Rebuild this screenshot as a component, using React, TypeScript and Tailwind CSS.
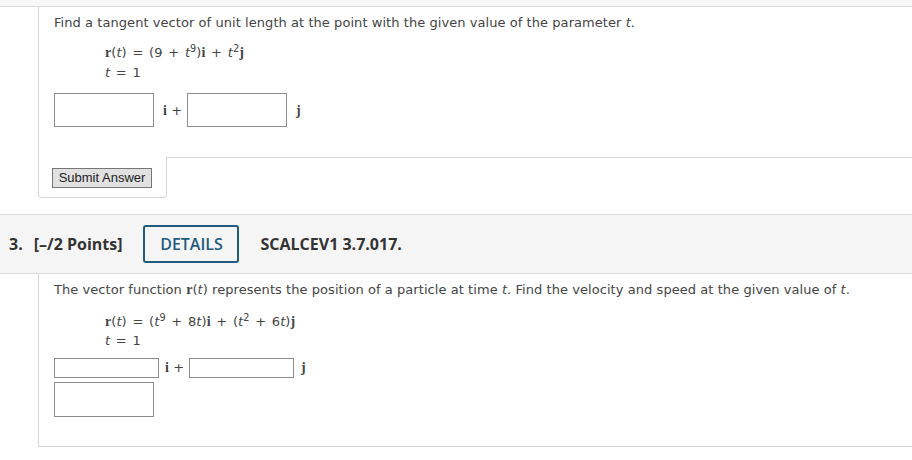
import React from "react";

const body = 'font-["DejaVu_Sans",Verdana,sans-serif]';
const head = 'font-["Open_Sans",sans-serif]';

function V({ children }: { children: React.ReactNode }) {
  return <b className='font-["Liberation_Serif",serif] text-[14px] font-bold'>{children}</b>;
}

function T() {
  return <i className="italic">t</i>;
}

function Box({ w, h }: { w: string; h: string }) {
  return <div className={`${w} ${h} border border-[#8c8c8c] bg-white`} />;
}

export default function App() {
  return (
    <div className={`w-[912px] h-[460px] overflow-hidden bg-white text-[#444] ${body} text-[13px] tracking-[0.06px]`}>
      <div className="h-[7px] bg-[#f7f7f7] border-b border-[#dcdcdc]" />

      {/* question 2 (bottom half visible) */}
      <div className="ml-[38px]">
        <div className="border-l border-[#d6d6d6] pl-[15px] pt-[5px] pb-[30px]">
          <p className="leading-[21px]">
            Find a tangent vector of unit length at the point with the given value of the parameter <T />.
          </p>
          <div className="ml-[51px] mt-[10px] leading-[20px] [word-spacing:1.5px]">
            <div>
              <V>r</V>(<T />) = (9 + <T />
              <sup>9</sup>)<V>i</V> + <T />
              <sup>2</sup>
              <V>j</V>
            </div>
            <div>
              <T /> = 1
            </div>
          </div>
          <div className="mt-[10px] flex items-center">
            <Box w="w-[100px]" h="h-[34px]" />
            <span className="ml-[9px] mr-[5px]">
              <V>i</V> +
            </span>
            <Box w="w-[100px]" h="h-[34px]" />
            <span className="ml-[9px]">
              <V>j</V>
            </span>
          </div>
        </div>
        <div className="flex">
          <div className="w-[129px] h-[41px] border-l border-r border-b border-[#d6d6d6] rounded-b-[4px] pl-[13px] pt-[11px]">
            <button className="h-[20px] w-[100px] border border-[#767676] bg-[#e1e1e1] font-['Liberation_Sans',Arial,sans-serif] text-[13px] leading-[18px] tracking-normal text-[#222]">
              Submit Answer
            </button>
          </div>
          <div className="flex-1 border-t border-[#d6d6d6]" />
        </div>
      </div>

      {/* question 3 header */}
      <div className={`mt-[16px] h-[60px] bg-[#f5f5f5] border-t border-b border-[#dcdcdc] flex items-center ${head} text-[16px] font-bold text-[#333] tracking-normal`}>
        <span className="ml-[9px]">3.</span>
        <span className="ml-[11px]">[–/2 Points]</span>
        <span className="ml-[21px] h-[38px] w-[96px] shrink-0 rounded-[3px] border-2 border-[#1f5c80] flex items-center justify-center font-semibold text-[#245a7e]">
          DETAILS
        </span>
        <span className="ml-[21px]">SCALCEV1 3.7.017.</span>
      </div>

      {/* question 3 body */}
      <div className="ml-[38px] border-l border-b border-[#d6d6d6] pl-[15px] pt-[5px] pb-[29px]">
        <p className="leading-[21px]">
          The vector function <V>r</V>(<T />) represents the position of a particle at time <T />. Find the velocity and speed at the given value of <T />.
        </p>
        <div className="ml-[51px] mt-[12px] leading-[19px] [word-spacing:1.5px]">
          <div>
            <V>r</V>(<T />) = (<T />
            <sup>9</sup> + 8<T />)<V>i</V> + (<T />
            <sup>2</sup> + 6<T />)<V>j</V>
          </div>
          <div>
            <T /> = 1
          </div>
        </div>
        <div className="mt-[7px] flex items-center">
          <Box w="w-[105px]" h="h-[20px]" />
          <span className="ml-[6px] mr-[5px]">
            <V>i</V> +
          </span>
          <Box w="w-[105px]" h="h-[20px]" />
          <span className="ml-[7px]">
            <V>j</V>
          </span>
        </div>
        <div className="mt-[4px]">
          <Box w="w-[100px]" h="h-[35px]" />
        </div>
      </div>
    </div>
  );
}
